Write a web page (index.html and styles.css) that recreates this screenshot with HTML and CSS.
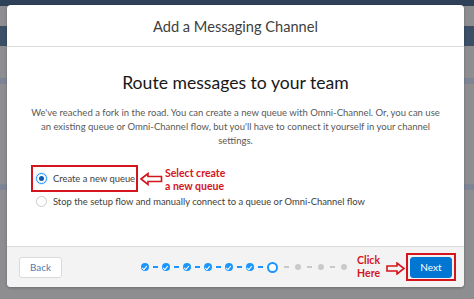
FILE: index.html
```html
<!DOCTYPE html>
<html>
<head>
<meta charset="utf-8">
<link rel="stylesheet" href="styles.css">
</head>
<body>
<div class="backdrop">
  <div class="bg-top"></div>
  <div class="bg-row bg-navy"></div>
  <div class="bg-row bg-strip"></div>
  <div class="bg-row bg-strip2"></div>
</div>
<div class="modal">
  <div class="modal-header">Add a Messaging Channel</div>
  <div class="modal-body">
    <h2 class="title">Route messages to your team</h2>
    <p class="desc">We've reached a fork in the road. You can create a new queue with Omni-Channel. Or, you can use an existing queue or Omni-Channel flow, but you'll have to connect it yourself in your channel settings.</p>
    <div class="options">
      <div class="opt-row">
        <div class="hl-box">
          <span class="radio checked"></span>
          <span class="opt-label">Create a new queue</span>
        </div>
        <svg class="arrow" width="23" height="14" viewBox="0 0 23 14"><path d="M1 7 L8 1.5 V4.5 H21.5 V9.5 H8 V12.5 Z" fill="none" stroke="#d4151d" stroke-width="1.6" stroke-linejoin="miter"/></svg>
        <div class="note">Select create<br>a new queue</div>
      </div>
      <div class="opt-row2">
        <span class="radio"></span>
        <span class="opt-label">Stop the setup flow and manually connect to a queue or Omni-Channel flow</span>
      </div>
    </div>
  </div>
  <div class="modal-footer">
    <button class="btn-back">Back</button>
    <div class="progress">
      <span class="dot done"></span><span class="seg"></span>
      <span class="dot done"></span><span class="seg"></span>
      <span class="dot done"></span><span class="seg"></span>
      <span class="dot done"></span><span class="seg"></span>
      <span class="dot done"></span><span class="seg"></span>
      <span class="dot done"></span><span class="seg"></span>
      <span class="dot current"></span><span class="seg grey"></span>
      <span class="dot todo"></span><span class="seg grey"></span>
      <span class="dot todo"></span><span class="seg grey"></span>
      <span class="dot todo"></span>
    </div>
    <div class="next-area">
      <div class="note click">Click<br>Here</div>
      <svg class="arrow2" width="19" height="13" viewBox="0 0 19 13"><path d="M1 4 H11 V1 L18 6.5 L11 12 V9 H1 Z" fill="none" stroke="#d4151d" stroke-width="1.6"/></svg>
      <div class="hl-next"><button class="btn-next">Next</button></div>
    </div>
  </div>
</div>
</body>
</html>
```
FILE: styles.css
```css
* { box-sizing: border-box; }
html, body { margin: 0; padding: 0; }
body {
  width: 474px; height: 299px; overflow: hidden;
  background: #8e8e90;
  font-family: "Lato", "Open Sans", sans-serif;
  position: relative;
}
.backdrop { display: flex; flex-direction: column; height: 299px; }
.bg-top { height: 6px; background: #2e4159; }
.bg-row { width: 100%; }
.bg-navy { height: 20px; margin-top: 20px; background: #3b4f66; }
.bg-strip { height: 6px; margin-top: 32px; background: #7d8594; }
.bg-strip2 { height: 6px; margin-top: 100px; background: #7d8594; }

.modal {
  position: absolute; left: 7px; top: 5px; width: 457px; height: 282px;
  background: #fff; border-radius: 4px;
  display: flex; flex-direction: column;
  box-shadow: 0 1px 3px rgba(0,0,0,0.25);
  overflow: hidden;
}
.modal-header {
  height: 42px; border-bottom: 1px solid #dddbda;
  display: flex; align-items: center; justify-content: center;
  font-size: 14.6px; color: #3e3e3c; padding-top: 2px;
}
.modal-body { flex: 1; padding: 0 20px; }
.title {
  margin: 24px 0 0; text-align: center; font-weight: 400;
  font-size: 17.6px; color: #181818; line-height: 24px;
}
.desc {
  margin: 11px 0 0; text-align: center; font-size: 9.5px;
  line-height: 14px; color: #595959;
}
.options { margin-top: 17px; padding-left: 4px; }
.opt-row { display: flex; align-items: center; height: 27px; }
.hl-box {
  display: flex; align-items: center; gap: 6px;
  width: 107px; height: 27px; border: 2.5px solid #d4151d;
  padding-left: 3px;
}
.radio {
  width: 11px; height: 11px; border-radius: 50%;
  border: 1px solid #c9c9c9; background: #fff; flex: none;
  display: inline-flex; align-items: center; justify-content: center;
}
.radio.checked { border-color: #1b96ff; box-shadow: 0 0 0 1px #d8ecff; }
.radio.checked::after {
  content: ""; width: 5px; height: 5px; border-radius: 50%; background: #0b5cab;
}
.opt-label { font-size: 9.4px; color: #3e3e3c; white-space: nowrap; }
.arrow { margin-left: 2px; }
.note {
  color: #d4151d; font-weight: 700; font-size: 10.5px; line-height: 13px;
  margin-left: 2px; margin-top: 2px;
}
.opt-row2 { display: flex; align-items: center; gap: 6px; margin-top: 4px; padding-left: 5px; }

.modal-footer {
  height: 41px; border-top: 1px solid #dddbda; background: #f3f3f3;
  display: flex; align-items: center; padding: 0 12px;
}
.btn-back {
  width: 43px; height: 21px; border: 1px solid #dddbda; border-radius: 3px;
  background: #fff; color: #5677ac; font-family: inherit; font-size: 9.8px; padding: 0;
}
.progress { display: flex; align-items: center; margin-left: 79px; }
.dot { flex: none; border-radius: 50%; }
.dot.done {
  width: 8px; height: 8px; background: #1b96ff; position: relative;
}
.dot.done::after {
  content: ""; position: absolute; left: 2.3px; top: 1.6px; width: 2.4px; height: 3.6px;
  border: solid #fff; border-width: 0 1.1px 1.1px 0; transform: rotate(40deg);
}
.dot.current { width: 11px; height: 11px; border: 2.5px solid #1b96ff; background: #fff; }
.dot.todo { width: 6px; height: 6px; background: #c9c9c9; }
.seg { width: 5px; height: 1.5px; background: #1b96ff; margin: 0 4px; }
.seg.grey { background: #c9c9c9; width: 5px; margin: 0 6px; }
.next-area { margin-left: auto; display: flex; align-items: center; }
.note.click { margin: 0; line-height: 13px; margin-right: 6px; }
.arrow2 { margin-right: 1px; margin-top: 2px; }
.hl-next {
  border: 2px solid #d4151d; padding: 1.5px; width: 50px; height: 28px;
  display: flex; align-items: center; justify-content: center; margin-right: -4px;
}
.btn-next {
  width: 42px; height: 21px; background: #0176d3; color: #fff; border: 1px solid #0176d3;
  border-radius: 3px; font-family: inherit; font-size: 10px; padding: 0;
}
```
